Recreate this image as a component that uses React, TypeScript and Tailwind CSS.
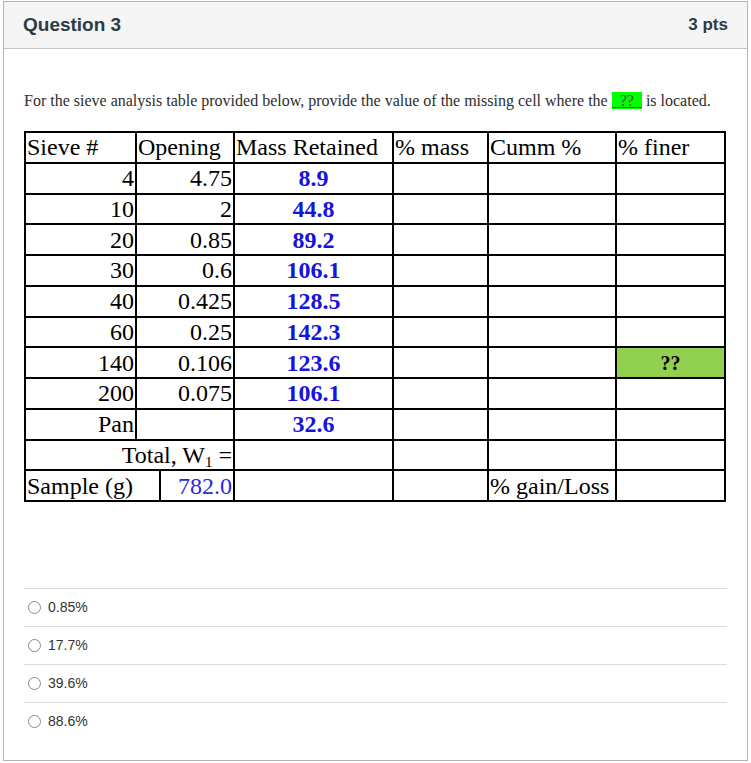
import React from 'react';

const serif = { fontFamily: '"Liberation Serif", "Times New Roman", serif' };

const rows = [
  { sieve: '4', open: '4.75', mass: '8.9' },
  { sieve: '10', open: '2', mass: '44.8' },
  { sieve: '20', open: '0.85', mass: '89.2' },
  { sieve: '30', open: '0.6', mass: '106.1' },
  { sieve: '40', open: '0.425', mass: '128.5' },
  { sieve: '60', open: '0.25', mass: '142.3' },
  { sieve: '140', open: '0.106', mass: '123.6', missing: true },
  { sieve: '200', open: '0.075', mass: '106.1' },
  { sieve: 'Pan', open: '', mass: '32.6' },
];

const answers = ['0.85%', '17.7%', '39.6%', '88.6%'];

const td = 'border-2 border-black p-0 px-[1px] h-[30.75px] leading-[26px] whitespace-nowrap';

export default function App() {
  return (
    <div className="min-h-screen bg-white pt-[1px] pl-[3px]">
      <div className="w-[745px] h-[760px] border border-[#b3b3b3] bg-white">
        <div className="h-[47px] bg-[#f5f5f5] border-b border-[#c4c4c4] flex items-center justify-between px-[19px] font-['Liberation_Sans',Arial,sans-serif] font-bold text-[#2d3b45]">
          <span className="text-[19px]">Question 3</span>
          <span className="text-[17px]">3 pts</span>
        </div>

        <div className="px-[20px]">
          <p className="pt-[43px] text-[16px] leading-[18px] text-[#2d2d2d]" style={serif}>
            For the sieve analysis table provided below, provide the value of the missing cell where the{' '}
            <span className="bg-[#00ff00] underline text-[#3a5a3a]">&nbsp;&nbsp;??&nbsp;&nbsp;</span> is located.
          </p>

          <table className="mt-[21px] w-[700px] table-fixed border-collapse text-[24px] text-black" style={serif}>
            <colgroup>
              <col className="w-[111px]" />
              <col className="w-[24px]" />
              <col className="w-[74px]" />
              <col className="w-[159px]" />
              <col className="w-[95px]" />
              <col className="w-[128px]" />
              <col className="w-[109px]" />
            </colgroup>
            <tbody>
              <tr>
                <td className={`${td} text-left`}>Sieve #</td>
                <td colSpan={2} className={`${td} text-left`}>Opening</td>
                <td className={`${td} text-left`}>Mass Retained</td>
                <td className={`${td} text-left`}>% mass</td>
                <td className={`${td} text-left`}>Cumm %</td>
                <td className={`${td} text-left`}>% finer</td>
              </tr>
              {rows.map((r) => (
                <tr key={r.sieve}>
                  <td className={`${td} text-right`}>{r.sieve}</td>
                  <td colSpan={2} className={`${td} text-right`}>{r.open}</td>
                  <td className={`${td} text-center font-bold text-[#1414e0]`}>{r.mass}</td>
                  <td className={td}></td>
                  <td className={td}></td>
                  {r.missing ? (
                    <td className={`${td} text-center font-bold text-[20px] bg-[#92d050]`}>??</td>
                  ) : (
                    <td className={td}></td>
                  )}
                </tr>
              ))}
              <tr>
                <td colSpan={3} className={`${td} text-right`}>
                  Total, W<sub className="text-[15px]">1</sub> =
                </td>
                <td className={td}></td>
                <td className={td}></td>
                <td className={td}></td>
                <td className={td}></td>
              </tr>
              <tr>
                <td colSpan={2} className={`${td} text-left`}>Sample (g)</td>
                <td className={`${td} text-right text-[#2a2ae0]`}>782.0</td>
                <td className={td}></td>
                <td className={td}></td>
                <td className={`${td} text-left`}>% gain/Loss</td>
                <td className={td}></td>
              </tr>
            </tbody>
          </table>

          <div className="mt-[86px] font-['Liberation_Sans',Arial,sans-serif] text-[14px] text-[#333]">
            {answers.map((a) => (
              <label key={a} className="flex items-center h-[38px] border-t border-[#dcdcdc] pl-[4px] gap-[7px]">
                <span className="w-[13px] h-[13px] rounded-full border border-[#8a8a8a] bg-white" />
                <span>{a}</span>
              </label>
            ))}
          </div>
        </div>
      </div>
    </div>
  );
}
